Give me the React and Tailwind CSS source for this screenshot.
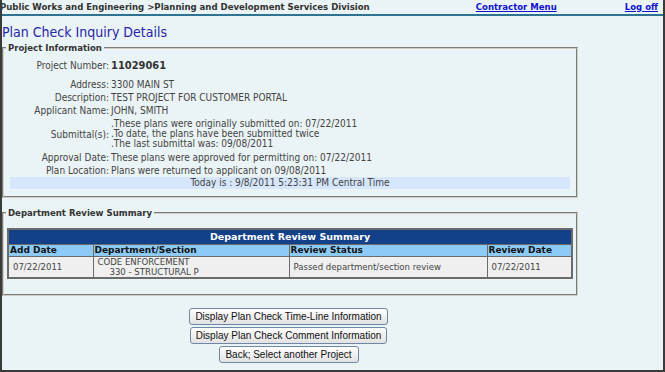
import React from 'react';

const labelRows = [
    { label: 'Address:', value: ['3300 MAIN ST'] },
    { label: 'Description:', value: ['TEST PROJECT FOR CUSTOMER PORTAL'] },
    { label: 'Applicant Name:', value: ['JOHN, SMITH'] },
    {
        label: 'Submittal(s):',
        value: [
            '.These plans were originally submitted on: 07/22/2011',
            '.To date, the plans have been submitted twice',
            '.The last submittal was: 09/08/2011',
        ],
    },
    { label: 'Approval Date:', value: ['These plans were approved for permitting on: 07/22/2011'] },
    { label: 'Plan Location:', value: ['Plans were returned to applicant on 09/08/2011'] },
];

function Row({ label, value }) {
    const multi = value.length > 1;
    return (
        <div className={`grid grid-cols-[107px_1fr] items-center ${multi ? 'py-[2px]' : 'h-[13px]'}`}>
            <div className="text-right pr-[2px] leading-[13px]">{label}</div>
            <div className="leading-[10px]">
                {value.map((line) => (
                    <div key={line}>{line}</div>
                ))}
            </div>
        </div>
    );
}

function Button({ children, className }) {
    return (
        <button
            type="button"
            className={`h-[17px] px-0 whitespace-nowrap border border-[#6f87a6] rounded-[3px] bg-gradient-to-b from-white to-[#e2e2e2] text-[10px] text-[#111] font-['Liberation_Sans',Arial,sans-serif] leading-none ${className}`}
        >
            {children}
        </button>
    );
}

const legendCls = "px-[2px] text-[9.5px] font-bold text-[#333] font-['DejaVu_Sans_Condensed','DejaVu_Sans',sans-serif]";

export default function App() {
    return (
        <div className="w-[665px] h-[372px] overflow-hidden bg-[#eaf3f5] border-l-2 border-r-2 border-b-2 border-[#3a3a3a] text-[#444] font-['DejaVu_Sans',Verdana,sans-serif]">
            <div className="flex items-center h-[16px] border-b-2 border-[#2f7393] text-[9.5px] font-bold font-['DejaVu_Sans_Condensed','DejaVu_Sans',sans-serif]">
                <span className="text-[#333] -ml-[2px]">Public Works and Engineering &gt;Planning and Development Services Division</span>
                <a href="#" className="ml-auto text-[#1111cc] underline">Contractor Menu</a>
                <a href="#" className="ml-[68px] mr-[5px] text-[#1111cc] underline">Log off</a>
            </div>

            <h1 className="mt-[7px] text-[14px] leading-[18px] text-[#2626a6] font-['DejaVu_Sans_Condensed','DejaVu_Sans',sans-serif]">Plan Check Inquiry Details</h1>

            <fieldset className="w-[576px] border-2 [border-style:groove] border-[#cfcfc8] pb-[7px]">
                <legend className={`ml-[2px] ${legendCls}`}>Project Information</legend>
                <div className="text-[10px] font-['DejaVu_Sans_Condensed','DejaVu_Sans',sans-serif]">
                    <div className="grid grid-cols-[107px_1fr] items-start h-[23px] leading-[22px]">
                        <div className="text-right pr-[2px]">Project Number:</div>
                        <div className="font-bold text-[11px] text-[#333]">11029061</div>
                    </div>
                    {labelRows.map((r) => (
                        <Row key={r.label} label={r.label} value={r.value} />
                    ))}
                    <div className="mx-[6px] h-[12px] bg-[#d6e6fb] text-center leading-[12px]">
                        Today is : 9/8/2011 5:23:31 PM Central Time
                    </div>
                </div>
            </fieldset>

            <fieldset className="w-[576px] mt-[8px] border-2 [border-style:groove] border-[#cfcfc8] px-[3px] pt-[7px] pb-[15px]">
                <legend className={`-ml-[1px] ${legendCls}`}>Department Review Summary</legend>
                <table className="w-[564px] border-collapse border-2 border-[#6b6b6b] text-[9px] table-fixed">
                    <colgroup>
                        <col className="w-[85px]" />
                        <col className="w-[196px]" />
                        <col className="w-[198px]" />
                        <col className="w-[85px]" />
                    </colgroup>
                    <thead>
                        <tr className="bg-[#124189] text-white h-[15px]">
                            <th colSpan={4} className="text-center font-bold text-[9.5px] leading-[14px] border border-[#6b6b6b]">
                                Department Review Summary
                            </th>
                        </tr>
                        <tr className="bg-[#8ccbf8] text-[#111] h-[12px]">
                            <th className="text-left font-bold px-[1px] border border-[#6b6b6b] leading-[11px]">Add Date</th>
                            <th className="text-left font-bold px-[1px] border border-[#6b6b6b] leading-[11px]">Department/Section</th>
                            <th className="text-left font-bold px-[1px] border border-[#6b6b6b] leading-[11px]">Review Status</th>
                            <th className="text-left font-bold px-[1px] border border-[#6b6b6b] leading-[11px]">Review Date</th>
                        </tr>
                    </thead>
                    <tbody className="text-[9.5px] font-['DejaVu_Sans_Condensed','DejaVu_Sans',sans-serif]">
                        <tr className="bg-[#efefef] h-[22px]">
                            <td className="px-[4px] border border-[#6b6b6b]">07/22/2011</td>
                            <td className="px-[4px] border border-[#6b6b6b] leading-[10px]">
                                <div>CODE ENFORCEMENT</div>
                                <div className="pl-[12px]">330 - STRUCTURAL P</div>
                            </td>
                            <td className="px-[4px] border border-[#6b6b6b]">Passed department/section review</td>
                            <td className="px-[4px] border border-[#6b6b6b]">07/22/2011</td>
                        </tr>
                    </tbody>
                </table>
            </fieldset>

            <div className="w-[573px] flex flex-col items-center gap-[2px] mt-[12px]">
                <Button className="w-[199px]">Display Plan Check Time-Line Information</Button>
                <Button className="w-[197px]">Display Plan Check Comment Information</Button>
                <Button className="w-[140px]">Back; Select another Project</Button>
            </div>
        </div>
    );
}
